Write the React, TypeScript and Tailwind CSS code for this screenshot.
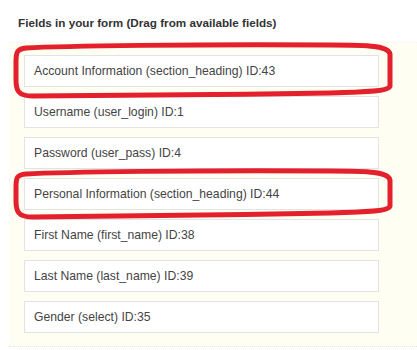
import React from "react";

const items = [
  "Account Information (section_heading) ID:43",
  "Username (user_login) ID:1",
  "Password (user_pass) ID:4",
  "Personal Information (section_heading) ID:44",
  "First Name (first_name) ID:38",
  "Last Name (last_name) ID:39",
  "Gender (select) ID:35",
];

export default function App() {
  return (
    <div
      className="relative w-[417px] h-[350px] bg-white overflow-hidden"
      style={{ fontFamily: '"Liberation Sans", Arial, sans-serif' }}
    >
      <div className="pt-[15px] pl-[18px] text-[11.7px] leading-[16px] font-bold text-[#333]">
        Fields in your form (Drag from available fields)
      </div>
      <div className="mt-[11px] ml-[9px] bg-[#fefef3] border-t border-[#f6f6e6] border-b border-dotted border-b-[#e6e6d6] pt-[12px] pb-[13px] pl-[15px] flex flex-col gap-[9px]">
        {items.map((t) => (
          <div
            key={t}
            className="w-[355px] h-[32px] bg-white border border-[#e3e3e3] flex items-center pl-[9px] text-[12.2px] text-[#444]"
          >
            {t}
          </div>
        ))}
      </div>
      <svg
        className="absolute left-0 top-0 pointer-events-none"
        width="417"
        height="350"
        viewBox="0 0 417 350"
      >
        <path
          d="M 26 48 C 60 46 200 44 330 45 C 370 45 388 46 390 54 L 390 86 C 389 91 370 92 330 93 C 220 95 80 96 32 96 C 18 96 16 90 16 80 L 16 62 C 16 52 17 49 26 48 Z"
          fill="none"
          stroke="#e3202c"
          strokeWidth="5"
          strokeLinejoin="round"
        />
        <path
          d="M 26 174 C 60 172 200 170 330 171 C 370 171 388 172 390 180 L 390 206 C 389 211 370 212 330 213 C 220 215 80 217 32 217 C 18 217 16 211 16 201 L 16 187 C 16 177 17 175 26 174 Z"
          fill="none"
          stroke="#e3202c"
          strokeWidth="5"
          strokeLinejoin="round"
        />
      </svg>
    </div>
  );
}
